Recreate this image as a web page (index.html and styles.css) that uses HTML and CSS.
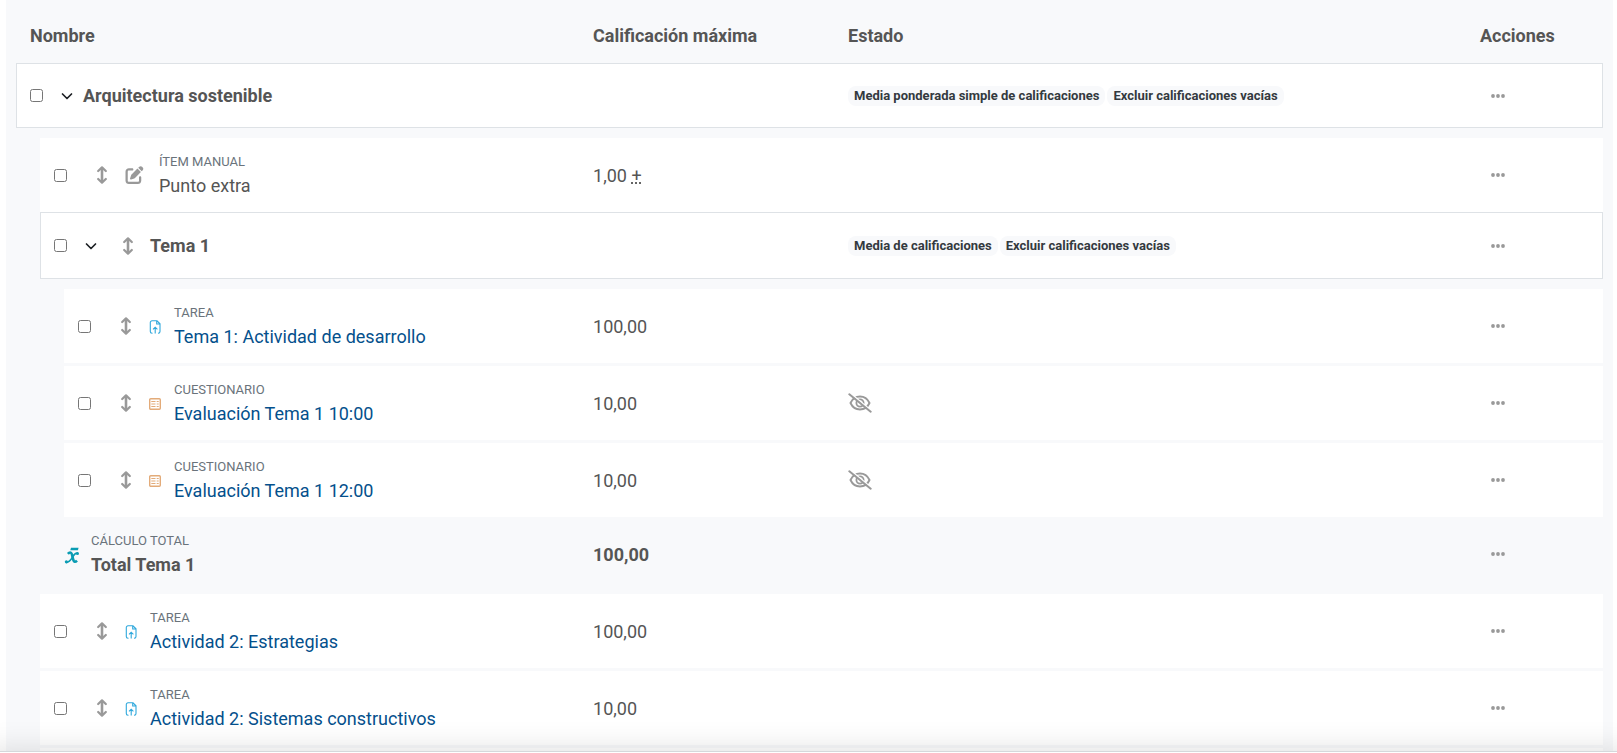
FILE: index.html
```html
<!DOCTYPE html>
<html lang="es">
  <head>
    <meta charset="UTF-8" />
    <meta name="viewport" content="width=device-width, initial-scale=1.0" />
    <title>Configuración de Calificaciones</title>
    <link rel="stylesheet" href="styles.css">
  </head>
  <body>
    <!-- Shared icons -->
    <svg class="sprite" aria-hidden="true">
      <symbol id="i-chevron" viewBox="0 0 12 12">
        <path d="M1.500 4L6 8.500l4.500-4.500" fill="none" stroke="currentColor" stroke-width="1.700" stroke-linecap="round" stroke-linejoin="round"/>
      </symbol>
      <symbol id="i-move" viewBox="0 0 10 18">
        <path d="M5 2v14" stroke="currentColor" stroke-width="2.600"/>
        <path d="M1.200 5L5 1.400 8.800 5M1.200 13L5 16.600 8.800 13" fill="none" stroke="currentColor" stroke-width="2.200" stroke-linecap="round" stroke-linejoin="round"/>
      </symbol>
      <symbol id="i-edit" viewBox="0 0 512 512">
        <path fill="currentColor" d="M471.600 21.700c-21.900-21.900-57.300-21.900-79.200 0L362.300 51.700l97.900 97.900 30.100-30.100c21.900-21.900 21.900-57.300 0-79.200L471.600 21.700zm-299.200 220c-6.100 6.100-10.800 13.600-13.500 21.900l-29.600 88.800c-2.900 8.600-.6 18.100 5.800 24.600s15.900 8.700 24.600 5.800l88.800-29.600c8.200-2.700 15.700-7.400 21.900-13.500L437.700 172.300 339.700 74.300 172.400 241.700zM96 64C43 64 0 107 0 160V416c0 53 43 96 96 96H352c53 0 96-43 96-96V320c0-17.700-14.300-32-32-32s-32 14.300-32 32v96c0 17.700-14.300 32-32 32H96c-17.700 0-32-14.300-32-32V160c0-17.700 14.300-32 32-32h96c17.700 0 32-14.300 32-32s-14.300-32-32-32H96z"/>
      </symbol>
      <symbol id="i-assign" viewBox="0 0 12 14">
        <path d="M3.500 13.200H3A1.700 1.700 0 0 1 1.300 11.500V2.500A1.700 1.700 0 0 1 3 .8h5l3 3v7.700a1.700 1.700 0 0 1-1.700 1.700H9M7.700 1v3h3M6.200 13.500V7.500M4 9.300l2.200-2.100 2.200 2.100" fill="none" stroke="currentColor" stroke-width="1.100"/>
      </symbol>
      <symbol id="i-quiz" viewBox="0 0 12 12">
        <rect x=".7" y=".7" width="10.600" height="10.600" rx="1" fill="none" stroke="currentColor" stroke-width="1.400"/>
        <path d="M2.300 3.500h4.200M2.300 6h4.200M2.300 8.500h4.200M7.700 3.500h2M7.700 6h2M7.700 8.500h2" stroke="currentColor" stroke-width="1.200"/>
      </symbol>
      <symbol id="i-hidden" viewBox="0 0 24 20">
        <path d="M2.500 10C4.500 5.700 8 3.500 12 3.500S19.500 5.700 21.500 10C19.500 14.300 16 16.500 12 16.500S4.500 14.300 2.500 10z" fill="none" stroke="currentColor" stroke-width="1.900"/>
        <circle cx="12" cy="10" r="3.600" fill="none" stroke="currentColor" stroke-width="1.800"/>
        <path d="M10.500 8.500a2 2 0 0 1 3 2.600z" fill="currentColor"/>
        <path d="M2.200.1l21 17.400" stroke="#fff" stroke-width="1.600"/>
        <path d="M1.300 1.300l21.400 17.400" stroke="currentColor" stroke-width="2" stroke-linecap="round"/>
      </symbol>
      <symbol id="i-mean" viewBox="0 0 15 18">
        <path d="M6.500.8h7.600l-.7 2.400H5.800z" fill="currentColor"/>
        <path d="M3.400 6.900C5 5 6.700 5 7.300 7l1.600 6.200c.5 1.700 1.800 2.300 3.600.4" fill="none" stroke="currentColor" stroke-width="2.600"/>
        <path d="M13.400 6.300c-2.200-.7-3.700 1-5.200 3.500S4.500 15.700 1.600 15.300" fill="none" stroke="currentColor" stroke-width="1.600"/>
        <circle cx="13" cy="6.600" r="1.500" fill="currentColor"/>
        <circle cx="1.900" cy="14.800" r="1.600" fill="currentColor"/>
      </symbol>
      <symbol id="i-more" viewBox="0 0 14 4">
        <circle cx="2" cy="2" r="1.900" fill="currentColor"/>
        <circle cx="7" cy="2" r="1.900" fill="currentColor"/>
        <circle cx="12" cy="2" r="1.900" fill="currentColor"/>
      </symbol>
    </svg>

    <main class="gradebook">
      <table class="setup">
        <colgroup>
          <col class="col-indent">
          <col class="col-indent">
          <col class="col-name">
          <col class="col-max">
          <col>
          <col class="col-actions">
        </colgroup>
        <thead>
          <tr>
            <th colspan="3" scope="col">Nombre</th>
            <th scope="col">Calificación máxima</th>
            <th scope="col">Estado</th>
            <th scope="col">Acciones</th>
          </tr>
        </thead>
        <tbody>
          <tr class="category">
            <td class="cell-first" colspan="3">
              <div class="name">
                <input type="checkbox" aria-label="Seleccionar Arquitectura sostenible">
                <button class="toggle" aria-label="Contraer"><svg><use href="#i-chevron"/></svg></button>
                <span class="title">Arquitectura sostenible</span>
              </div>
            </td>
            <td></td>
            <td><div class="badges"><span class="badge">Media ponderada simple de calificaciones</span><span class="badge">Excluir calificaciones vacías</span></div></td>
            <td><button class="more" aria-label="Acciones"><svg><use href="#i-more"/></svg></button></td>
          </tr>
          <tr class="spacer"><td colspan="6"></td></tr>

          <tr class="item last">
            <td class="indent"></td>
            <td colspan="2">
              <div class="name">
                <input type="checkbox" aria-label="Seleccionar Punto extra">
                <button class="move" aria-label="Mover"><svg><use href="#i-move"/></svg></button>
                <svg class="icon icon-edit"><use href="#i-edit"/></svg>
                <div class="text"><span class="type">Ítem manual</span><span>Punto extra</span></div>
              </div>
            </td>
            <td>1,00 <abbr title="Puntos extra">+</abbr></td>
            <td></td>
            <td><button class="more" aria-label="Acciones"><svg><use href="#i-more"/></svg></button></td>
          </tr>

          <tr class="category nested">
            <td class="indent"></td>
            <td class="cell-first" colspan="2">
              <div class="name">
                <input type="checkbox" aria-label="Seleccionar Tema 1">
                <button class="toggle" aria-label="Contraer"><svg><use href="#i-chevron"/></svg></button>
                <button class="move" aria-label="Mover"><svg><use href="#i-move"/></svg></button>
                <span class="title">Tema 1</span>
              </div>
            </td>
            <td></td>
            <td><div class="badges"><span class="badge">Media de calificaciones</span><span class="badge">Excluir calificaciones vacías</span></div></td>
            <td><button class="more" aria-label="Acciones"><svg><use href="#i-more"/></svg></button></td>
          </tr>
          <tr class="spacer"><td colspan="6"></td></tr>

          <tr class="item">
            <td class="indent" colspan="2"></td>
            <td>
              <div class="name">
                <input type="checkbox" aria-label="Seleccionar Tema 1: Actividad de desarrollo">
                <button class="move" aria-label="Mover"><svg><use href="#i-move"/></svg></button>
                <svg class="icon icon-assign"><use href="#i-assign"/></svg>
                <div class="text"><span class="type">Tarea</span><a href="#">Tema 1: Actividad de desarrollo</a></div>
              </div>
            </td>
            <td>100,00</td>
            <td></td>
            <td><button class="more" aria-label="Acciones"><svg><use href="#i-more"/></svg></button></td>
          </tr>
          <tr class="item">
            <td class="indent" colspan="2"></td>
            <td>
              <div class="name">
                <input type="checkbox" aria-label="Seleccionar Evaluación Tema 1 10:00">
                <button class="move" aria-label="Mover"><svg><use href="#i-move"/></svg></button>
                <svg class="icon icon-quiz"><use href="#i-quiz"/></svg>
                <div class="text"><span class="type">Cuestionario</span><a href="#">Evaluación Tema 1 10:00</a></div>
              </div>
            </td>
            <td>10,00</td>
            <td><svg class="hidden-icon" role="img" aria-label="Oculto"><use href="#i-hidden"/></svg></td>
            <td><button class="more" aria-label="Acciones"><svg><use href="#i-more"/></svg></button></td>
          </tr>
          <tr class="item last">
            <td class="indent" colspan="2"></td>
            <td>
              <div class="name">
                <input type="checkbox" aria-label="Seleccionar Evaluación Tema 1 12:00">
                <button class="move" aria-label="Mover"><svg><use href="#i-move"/></svg></button>
                <svg class="icon icon-quiz"><use href="#i-quiz"/></svg>
                <div class="text"><span class="type">Cuestionario</span><a href="#">Evaluación Tema 1 12:00</a></div>
              </div>
            </td>
            <td>10,00</td>
            <td><svg class="hidden-icon" role="img" aria-label="Oculto"><use href="#i-hidden"/></svg></td>
            <td><button class="more" aria-label="Acciones"><svg><use href="#i-more"/></svg></button></td>
          </tr>

          <tr class="item total">
            <td class="indent" colspan="2"></td>
            <td class="total-name">
              <div class="name">
                <svg class="icon-mean"><use href="#i-mean"/></svg>
                <div class="text"><span class="type">Cálculo total</span><span class="title">Total Tema 1</span></div>
              </div>
            </td>
            <td class="title">100,00</td>
            <td></td>
            <td><button class="more" aria-label="Acciones"><svg><use href="#i-more"/></svg></button></td>
          </tr>

          <tr class="item">
            <td class="indent"></td>
            <td colspan="2">
              <div class="name">
                <input type="checkbox" aria-label="Seleccionar Actividad 2: Estrategias">
                <button class="move" aria-label="Mover"><svg><use href="#i-move"/></svg></button>
                <svg class="icon icon-assign"><use href="#i-assign"/></svg>
                <div class="text"><span class="type">Tarea</span><a href="#">Actividad 2: Estrategias</a></div>
              </div>
            </td>
            <td>100,00</td>
            <td></td>
            <td><button class="more" aria-label="Acciones"><svg><use href="#i-more"/></svg></button></td>
          </tr>
          <tr class="item">
            <td class="indent"></td>
            <td colspan="2">
              <div class="name">
                <input type="checkbox" aria-label="Seleccionar Actividad 2: Sistemas constructivos">
                <button class="move" aria-label="Mover"><svg><use href="#i-move"/></svg></button>
                <svg class="icon icon-assign"><use href="#i-assign"/></svg>
                <div class="text"><span class="type">Tarea</span><a href="#">Actividad 2: Sistemas constructivos</a></div>
              </div>
            </td>
            <td>10,00</td>
            <td></td>
            <td><button class="more" aria-label="Acciones"><svg><use href="#i-more"/></svg></button></td>
          </tr>
          <tr class="tail"><td class="indent"></td><td colspan="5"></td></tr>
        </tbody>
      </table>
    </main>
    <footer class="sticky-footer"></footer>
  </body>
</html>
```
FILE: styles.css
```css
:root {
  --page-bg: #f8f9fb;
  --text: #555;
  --muted: #6a737b;
  --link: #04508c;
  --border: #dee2e6;
  --icon: #999;
}

* {
  box-sizing: border-box;
}

body {
  margin: 0;
  background: #fff;
  color: var(--text);
  font-family: Roboto, "Liberation Sans", sans-serif;
  font-size: 18px;
  line-height: 27px;
}

.sprite {
  display: none;
}

.gradebook {
  margin: 0 4px 0 6px;
  padding: 0 10px;
  background: var(--page-bg);
}

.setup {
  width: 100%;
  table-layout: fixed;
  border-collapse: separate;
  border-spacing: 0;
}

.col-indent {
  width: 24px;
}

.col-name {
  width: 515px;
}

.col-max {
  width: 255px;
}

.col-actions {
  width: 137px;
}

th,
td {
  padding: 0 14px;
  text-align: left;
  vertical-align: middle;
}

th {
  height: 63px;
  padding-top: 7px;
}

th,
.title {
  font-weight: 700;
}

/* Category rows */
.category td {
  height: 65px;
  background: #fff;
  border: solid var(--border);
  border-width: 1px 0;
}

.category.nested td {
  height: 67px;
}

.category .cell-first {
  padding-left: 13px;
  border-left-width: 1px;
}

.category td:last-child {
  border-right-width: 1px;
}

.spacer td {
  height: 10px;
  padding: 0;
}

/* Grade items */
.item td {
  height: 77px;
  background: #fff;
  border-bottom: 3px solid var(--page-bg);
}

.item.last td {
  height: 74px;
  border-bottom: 0;
}

.setup .indent,
.total td {
  background: transparent;
  border-color: transparent;
}

.category.nested .indent {
  border: 0;
}

.total .total-name {
  padding-left: 0;
}

.tail td {
  height: 3px;
  padding: 0;
  background: #fff;
}

.name {
  display: flex;
  align-items: center;
}

.text {
  display: flex;
  flex-direction: column;
}

.type {
  color: var(--muted);
  font-size: 13px;
  line-height: 20px;
  text-transform: uppercase;
}

a {
  color: var(--link);
  text-decoration: none;
}

a:hover {
  text-decoration: underline;
}

input[type="checkbox"] {
  width: 13px;
  height: 13px;
  margin: 0;
}

button {
  display: flex;
  align-items: center;
  justify-content: center;
  height: 24px;
  padding: 0;
  border: 0;
  background: none;
  color: var(--icon);
  cursor: pointer;
}

.toggle {
  width: 24px;
  margin: 0 4px 0 12px;
  color: #1d2125;
}

.toggle svg {
  width: 12px;
  height: 12px;
}

.move {
  width: 20px;
  margin-left: 25px;
}

.toggle + .move {
  margin: 0 12px 0 11px;
}

.move svg {
  width: 10px;
  height: 18px;
}

.icon {
  margin: 2px 10px 0;
}

.icon-edit {
  width: 19px;
  height: 18px;
  margin: 0 15px 0 13px;
  color: var(--icon);
}

.icon-assign,
.icon-quiz {
  width: 18px;
  height: 14px;
}

.icon-assign {
  color: #2fa8dc;
}

.icon-quiz {
  height: 12px;
  color: #e3ab79;
}

.icon-mean {
  width: 16px;
  height: 18px;
  margin: 4px 11px 0 0;
  color: #0a9cb3;
}

.hidden-icon {
  display: block;
  width: 24px;
  height: 20px;
  color: var(--icon);
}

.badges {
  display: flex;
  gap: 2px;
}

.badge {
  padding: 0 6px;
  border-radius: 8px;
  background: var(--page-bg);
  color: #343a40;
  font-size: 13px;
  font-weight: 700;
  line-height: 20px;
}

.more {
  width: 36px;
}

.more svg {
  width: 14px;
  height: 4px;
}

.sticky-footer {
  position: sticky;
  bottom: 0;
  height: 2px;
  border-top: 1px solid #d5d8db;
  background: #fff;
  box-shadow: 0 16px 32px 16px rgba(0, 0, 0, 0.14);
}
```
